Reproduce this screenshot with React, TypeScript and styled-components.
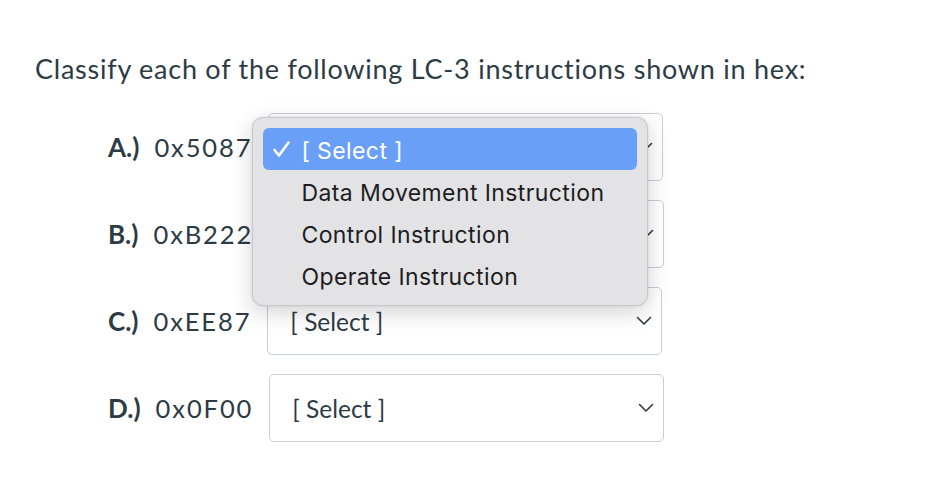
import React from "react";
import styled, { createGlobalStyle } from "styled-components";

const Global = createGlobalStyle`
  html, body { margin: 0; padding: 0; background: #ffffff; }
  body { font-family: Lato, "Liberation Sans", sans-serif; color: #2d3b45; }
`;

const Page = styled.div`
  width: 934px;
  height: 496px;
  box-sizing: border-box;
  padding: 51px 0 0 35px;
  overflow: hidden;
`;

const Heading = styled.p`
  margin: 0 0 26px 0;
  font-size: 27px;
  letter-spacing: 0.75px;
  line-height: 36px;
  font-weight: 400;
  color: #2d3b45;
`;

const List = styled.div`
  display: flex;
  flex-direction: column;
  gap: 19px;
  padding-left: 73px;
`;

const Row = styled.div`
  display: flex;
  align-items: center;
`;

const Label = styled.span`
  display: inline-flex;
  align-items: baseline;
  font-size: 25.5px;
  color: #2d3b45;
  white-space: nowrap;
`;

const Letter = styled.b`
  font-size: 26px;
  font-weight: 700;
  margin-right: 15px;
`;

const Hex = styled.span`
  letter-spacing: 1.9px;
  margin-right: 16px;
`;

const SelectWrap = styled.div`
  position: relative;
`;

const SelectBox = styled.div`
  box-sizing: border-box;
  width: 395px;
  height: 68px;
  border: 1px solid #c7cdd1;
  border-radius: 5px;
  background: #fff;
  display: flex;
  align-items: center;
  justify-content: space-between;
  padding: 0 9px 0 22px;
  font-size: 24.5px;
  color: #2d3b45;
`;

const Chevron = () => (
  <svg width="16" height="10" viewBox="0 0 16 10" fill="none">
    <path d="M1.5 1.5 L8 8 L14.5 1.5" stroke="#2d3b45" strokeWidth="1.6" strokeLinecap="round" strokeLinejoin="round" />
  </svg>
);

const Popup = styled.div`
  position: absolute;
  left: -16px;
  top: 4px;
  width: 396px;
  height: 189px;
  box-sizing: border-box;
  background: #e3e3e5;
  border: 1px solid #c9c9cb;
  border-radius: 11px;
  box-shadow: 0 6px 22px rgba(0, 0, 0, 0.18), 0 0 2px rgba(0, 0, 0, 0.12);
  padding: 10px 10px 0 10px;
  display: flex;
  flex-direction: column;
  z-index: 10;
  font-family: Inter, "Noto Sans", sans-serif;
`;

const Option = styled.div<{ $active?: boolean }>`
  box-sizing: border-box;
  height: 42px;
  display: flex;
  align-items: center;
  border-radius: 6px;
  padding: 3px 0 0 38px;
  position: relative;
  font-size: 23px;
  letter-spacing: 0.4px;
  color: ${(p) => (p.$active ? "#ffffff" : "#1d1d1f")};
  background: ${(p) => (p.$active ? "#6a9ff8" : "transparent")};
`;

const Check = styled.span`
  position: absolute;
  left: 9px;
  top: 50%;
  transform: translateY(-50%);
  display: flex;
`;

const CheckMark = () => (
  <svg width="19" height="18" viewBox="0 0 19 18" fill="none">
    <path d="M2.5 10 L7 15.5 L16.5 2.5" stroke="#ffffff" strokeWidth="2.6" strokeLinecap="round" strokeLinejoin="round" />
  </svg>
);

const items = [
  { letter: "A.)", hex: "0x5087", open: true },
  { letter: "B.)", hex: "0xB222" },
  { letter: "C.)", hex: "0xEE87" },
  { letter: "D.)", hex: "0x0F00" },
];

const options = ["[ Select ]", "Data Movement Instruction", "Control Instruction", "Operate Instruction"];

export default function App() {
  return (
    <>
      <Global />
      <Page>
        <Heading>Classify each of the following LC-3 instructions shown in hex:</Heading>
        <List>
          {items.map((it) => (
            <Row key={it.letter}>
              <Label>
                <Letter>{it.letter}</Letter>
                <Hex>{it.hex}</Hex>
              </Label>
              <SelectWrap>
                <SelectBox>
                  <span>[ Select ]</span>
                  <Chevron />
                </SelectBox>
                {it.open && (
                  <Popup>
                    {options.map((o, i) => (
                      <Option key={o} $active={i === 0}>
                        {i === 0 && (
                          <Check>
                            <CheckMark />
                          </Check>
                        )}
                        {o}
                      </Option>
                    ))}
                  </Popup>
                )}
              </SelectWrap>
            </Row>
          ))}
        </List>
      </Page>
    </>
  );
}
